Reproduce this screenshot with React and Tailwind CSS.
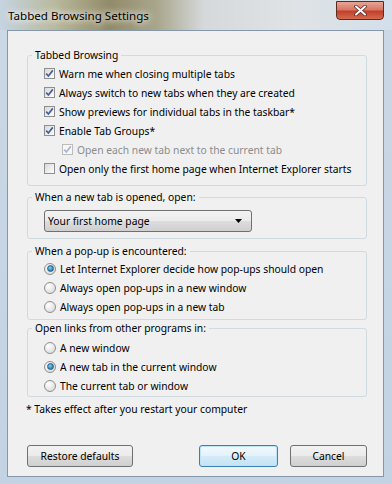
import React from 'react';

const btn = "flex h-[22px] items-center justify-center rounded-[3px] border border-[#707070] bg-[linear-gradient(180deg,#f2f2f2_0%,#ebebeb_48%,#dddddd_52%,#cfcfcf_100%)] text-black";

function Check({ checked = true, disabled = false }) {
    return (
        <span className={`flex h-[11px] w-[11px] shrink-0 items-center justify-center border ${disabled ? 'border-[#bcbcbc] bg-[#f7f7f7]' : 'border-[#8e8f8f] bg-[linear-gradient(135deg,#d8d8d8,#ffffff)]'}`}>
            {checked && (
                <svg width="9" height="9" viewBox="0 0 9 9">
                    <path d="M1.2 4.6 L3.4 7 L7.8 1.4" fill="none" stroke={disabled ? '#a9b6cf' : '#4a5f97'} strokeWidth="1.7" />
                </svg>
            )}
        </span>
    );
}

function Radio({ checked = false }) {
    return (
        <span className="flex h-[12px] w-[12px] shrink-0 items-center justify-center rounded-full border border-[#8e8f8f] bg-[radial-gradient(circle_at_35%_30%,#ffffff,#d4d4d4)]">
            {checked && <span className="h-[7px] w-[7px] rounded-full border border-[#2a5f85] bg-[radial-gradient(circle_at_40%_35%,#7fd0f2,#115d8c)]" />}
        </span>
    );
}

function Row({ children, text, muted, indent }) {
    return (
        <div className={`flex h-[19px] items-center gap-[4px] whitespace-nowrap ${indent ? 'pl-[18px]' : ''} ${muted ? 'text-[#8d8d8d]' : 'text-black'}`}>
            {children}
            <span>{text}</span>
        </div>
    );
}

function Group({ title, children, className }) {
    return (
        <fieldset className={`rounded-[3px] border border-[#d0dae1] ${className}`}>
            <legend className="ml-[4px] px-[3px] leading-[14px] text-black">{title}</legend>
            {children}
        </fieldset>
    );
}

export default function App() {
    return (
        <div className="flex h-[484px] w-[392px] flex-col bg-[linear-gradient(180deg,#cbd8e5,#c3d3e3)] font-['Noto_Sans',sans-serif] text-[10.3px] leading-[14px]">
            {/* title bar over aero glass */}
            <div className="flex h-[30px] items-start bg-[linear-gradient(90deg,#c6d4e1_0%,#b9b99d_14%,#928b68_28%,#a9a68c_40%,#d5d9db_52%,#dfe3e6_75%,#d3dfea_100%)]">
                <span className="mt-[8px] ml-[8px] text-[11.6px] leading-[16px] text-black [text-shadow:0_0_6px_#fff,0_0_10px_#fff]">Tabbed Browsing Settings</span>
                <div className="ml-auto mt-[1px] mr-[8px] flex h-[19px] w-[48px] items-center justify-center rounded-b-[4px] border border-[#5b2a22] bg-[linear-gradient(180deg,#e9a596_0%,#d77866_45%,#c2402c_55%,#d46a4f_100%)]">
                    <svg width="13" height="11" viewBox="0 0 13 11">
                        <path d="M2 1.5 L11 9.5 M11 1.5 L2 9.5" stroke="#5a2a22" strokeWidth="3.6" strokeLinecap="round" />
                        <path d="M2 1.5 L11 9.5 M11 1.5 L2 9.5" stroke="#ffffff" strokeWidth="2" strokeLinecap="round" />
                    </svg>
                </div>
            </div>

            <div className="flex flex-1">
                <div className="w-[7px]" />
                <div className="flex h-[447px] w-[377px] flex-col border border-[#8497ab] bg-[#f0f0f0] pt-[17px] pl-[19px] pr-[16px]">
                    <Group title="Tabbed Browsing">
                        <div className="pt-[2px] pb-[7px] pl-[16px]">
                            <Row text="Warn me when closing multiple tabs"><Check /></Row>
                            <Row text="Always switch to new tabs when they are created"><Check /></Row>
                            <Row text="Show previews for individual tabs in the taskbar*"><Check /></Row>
                            <Row text="Enable Tab Groups*"><Check /></Row>
                            <Row text="Open each new tab next to the current tab" muted indent><Check disabled /></Row>
                            <Row text="Open only the first home page when Internet Explorer starts"><Check checked={false} /></Row>
                        </div>
                    </Group>

                    <Group title="When a new tab is opened, open:" className="mt-[4px]">
                        <div className="pt-[6px] pb-[6px] pl-[16px]">
                            <div className={`${btn} w-[208px] justify-between! pl-[3px] pr-[9px]`}>
                                <span>Your first home page</span>
                                <svg width="7" height="4" viewBox="0 0 7 4"><path d="M0 0 H7 L3.5 4 Z" fill="#000" /></svg>
                            </div>
                        </div>
                    </Group>

                    <Group title="When a pop-up is encountered:" className="mt-[5px]">
                        <div className="pt-[1px] pb-[3px] pl-[16px]">
                            <Row text="Let Internet Explorer decide how pop-ups should open"><Radio checked /></Row>
                            <Row text="Always open pop-ups in a new window"><Radio /></Row>
                            <Row text="Always open pop-ups in a new tab"><Radio /></Row>
                        </div>
                    </Group>

                    <Group title="Open links from other programs in:" className="mt-[1px]">
                        <div className="pt-[3px] pb-[1px] pl-[16px]">
                            <Row text="A new window"><Radio /></Row>
                            <Row text="A new tab in the current window"><Radio checked /></Row>
                            <Row text="The current tab or window"><Radio /></Row>
                        </div>
                    </Group>

                    <p className="mt-[5px] -ml-[1px] text-black">* Takes effect after you restart your computer</p>

                    <div className="mt-[29px] flex items-center">
                        <button className={`${btn} w-[106px]`}>Restore defaults</button>
                        <button className="ml-auto flex h-[22px] w-[79px] items-center justify-center rounded-[3px] border border-[#3c7fb1] bg-[linear-gradient(180deg,#f2f9fd_0%,#e4f2fa_48%,#d3ebf8_52%,#c4e3f5_100%)] text-black shadow-[inset_0_0_0_1px_#bfe3f7]">OK</button>
                        <button className={`${btn} ml-[12px] w-[77px]`}>Cancel</button>
                    </div>
                </div>
                <div className="w-[8px]" />
            </div>
            <div className="h-[7px]" />
        </div>
    );
}
